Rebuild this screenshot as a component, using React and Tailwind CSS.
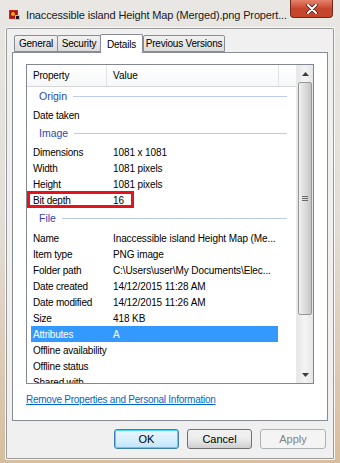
import React from "react";

const font = { fontFamily: '"Liberation Sans", Arial, sans-serif' };

function GroupRow({ label, h = "h-[20px]" }) {
  return (
    <div className={`flex items-center ${h} pl-[12px] pr-[9px] pb-[1px]`}>
      <span className="text-[#2f45b8] text-[10.5px] leading-none">{label}</span>
      <div className="flex-1 h-px bg-[#bccbe8] ml-[6px]" />
    </div>
  );
}

function Row({ label, value, selected, boxed }) {
  return (
    <div
      className={`relative flex items-center h-[16px] ml-[4px] w-[247px] ${
        selected ? "bg-[#3399ff] text-white" : "text-black"
      }`}
    >
      <span className="w-[82px] pl-[2px] whitespace-nowrap tracking-[-0.2px]">{label}</span>
      <span className="whitespace-nowrap tracking-[-0.1px]">{value}</span>
      {boxed && (
        <div className="absolute left-[-4px] top-[-1px] w-[107px] h-[17px] border-[3px] border-[#e3141c]" />
      )}
    </div>
  );
}

function Tab({ children, selected, w }) {
  return (
    <div
      className={`${w} flex items-center justify-center border border-[#898c95] whitespace-nowrap ${
        selected
          ? "bg-white border-b-0 h-[19px] -mb-px relative z-10 rounded-t-[2px]"
          : "bg-gradient-to-b from-[#f2f2f2] to-[#dcdcdc] h-[17px] mr-[-1px] rounded-t-[2px]"
      } text-[10px] tracking-[-0.2px] text-black`}
    >
      {children}
    </div>
  );
}

export default function App() {
  return (
    <div
      style={font}
      className="w-[340px] h-[463px] flex flex-col bg-gradient-to-b from-[#e9e7e4] via-[#e2ddd6] to-[#d7bd9f] overflow-hidden"
    >
      {/* title bar */}
      <div className="h-[28px] flex items-start shrink-0">
        <div className="pt-[10px] pl-[9px] flex items-center shrink-0">
          <svg width="11" height="10" viewBox="0 0 11 10">
            <rect x="0" y="0" width="9" height="9" fill="#c8261c" />
            <rect x="1" y="1" width="7" height="7" fill="#9c1a12" />
            <circle cx="4" cy="4" r="2" fill="#f2a31c" />
            <rect x="6" y="5" width="5" height="5" fill="#f6c21c" />
            <rect x="7" y="6" width="3" height="3" fill="#1c1c1c" />
          </svg>
        </div>
        <div className="pl-[6px] pt-[10px] text-[11px] tracking-[-0.15px] text-[#1a1a1a] whitespace-nowrap leading-none min-w-0 overflow-hidden">
          Inaccessible island Height Map (Merged).png Propert...
        </div>
        <div className="flex-1" />
        <div className="shrink-0 w-[43px] h-[18px] mr-[7px] rounded-b-[4px] border border-[#6b2a1c] border-t-0 bg-gradient-to-b from-[#e4826c] via-[#c9452c] to-[#c2472c] flex items-center justify-center">
          <svg width="12" height="10" viewBox="0 0 12 10">
            <path d="M2 1 L10 9 M10 1 L2 9" stroke="#3b1a14" strokeWidth="3.4" strokeLinecap="round" />
            <path d="M2 1 L10 9 M10 1 L2 9" stroke="#ffffff" strokeWidth="2" strokeLinecap="round" />
          </svg>
        </div>
      </div>

      {/* frame body */}
      <div className="flex-1 flex pl-[6px] pr-[6px] pb-[4px]">
        <div className="flex-1 flex flex-col bg-[#f0f0f0] border border-[#9a9a9a] rounded-[1px] shadow-[0_0_0_1px_#fbf8f4]">
          {/* tabs */}
          <div className="flex items-end pl-[7px] pt-[4px] h-[23px] shrink-0">
            <Tab w="w-[44px]">General</Tab>
            <Tab w="w-[44px]">Security</Tab>
            <Tab w="w-[43px]" selected>
              Details
            </Tab>
            <Tab w="w-[82px]">Previous Versions</Tab>
          </div>
          {/* panel */}
          <div className="mx-[5px] h-[369px] bg-white border border-[#898c95] flex flex-col text-[10px]">
            {/* list */}
            <div className="mt-[11px] mx-[13px] h-[320px] border border-[#828790] flex overflow-hidden">
              <div className="flex-1 flex flex-col overflow-hidden">
                {/* header */}
                <div className="h-[22px] flex border-b border-[#d5d5d5] bg-gradient-to-b from-white to-[#f6f7f8] shrink-0">
                  <div className="w-[80px] pl-[6px] flex items-center border-r border-[#e2e3e5] tracking-[-0.2px]">Property</div>
                  <div className="w-[172px] pl-[6px] flex items-center border-r border-[#e2e3e5]">Value</div>
                  <div className="flex-1" />
                </div>
                <div className="flex flex-col">
                  <GroupRow label="Origin" h="h-[20px]" />
                  <Row label="Date taken" value="" />
                  <GroupRow label="Image" h="h-[21px]" />
                  <Row label="Dimensions" value="1081 x 1081" />
                  <Row label="Width" value="1081 pixels" />
                  <Row label="Height" value="1081 pixels" />
                  <Row label="Bit depth" value="16" boxed />
                  <GroupRow label="File" h="h-[22px]" />
                  <Row label="Name" value="Inaccessible island Height Map (Me..." />
                  <Row label="Item type" value="PNG image" />
                  <Row label="Folder path" value="C:\Users\user\My Documents\Elec..." />
                  <Row label="Date created" value="14/12/2015 11:28 AM" />
                  <Row label="Date modified" value="14/12/2015 11:26 AM" />
                  <Row label="Size" value="418 KB" />
                  <Row label="Attributes" value="A" selected />
                  <Row label="Offline availability" value="" />
                  <Row label="Offline status" value="" />
                  <Row label="Shared with" value="" />
                </div>
              </div>
              {/* scrollbar */}
              <div className="w-[17px] flex flex-col bg-gradient-to-r from-[#e6e6e6] via-[#f4f4f4] to-[#e6e6e6] border-l border-[#eaeaea]">
                <div className="h-[17px] flex items-center justify-center">
                  <svg width="7" height="4" viewBox="0 0 7 4">
                    <path d="M0 4 L3.5 0 L7 4 Z" fill="#3c3c3c" />
                  </svg>
                </div>
                <div className="h-[233px] mx-[1px] rounded-[2px] border border-[#979797] bg-gradient-to-r from-[#f0f0f0] via-[#dcdcdc] to-[#c6c6c6] flex items-center justify-center">
                  <div className="flex flex-col gap-[1px]">
                    <div className="w-[6px] h-px bg-[#6a6a6a]" />
                    <div className="w-[6px] h-px bg-[#6a6a6a]" />
                    <div className="w-[6px] h-px bg-[#6a6a6a]" />
                  </div>
                </div>
                <div className="flex-1" />
                <div className="h-[17px] flex items-center justify-center">
                  <svg width="7" height="4" viewBox="0 0 7 4">
                    <path d="M0 0 L3.5 4 L7 0 Z" fill="#3c3c3c" />
                  </svg>
                </div>
              </div>
            </div>
            {/* link */}
            <div className="mt-[8px] ml-[13px] text-[10px] tracking-[-0.25px] text-[#0066cc] underline whitespace-nowrap">
              Remove Properties and Personal Information
            </div>
          </div>
          {/* buttons */}
          <div className="flex justify-end gap-[8px] pr-[7px] pt-[8px] text-[11px]">
            <div className="w-[65px] h-[20px] rounded-[3px] border border-[#3c7fb1] bg-gradient-to-b from-[#eaf6fd] via-[#d9f0fc] to-[#bee6fd] flex items-center justify-center shadow-[inset_0_0_0_1px_#48d5f8]">
              OK
            </div>
            <div className="w-[65px] h-[20px] rounded-[3px] border border-[#707070] bg-gradient-to-b from-[#f2f2f2] via-[#ebebeb] to-[#cfcfcf] flex items-center justify-center">
              Cancel
            </div>
            <div className="w-[66px] h-[20px] rounded-[3px] border border-[#adb2b5] bg-[#f4f4f4] text-[#838383] flex items-center justify-center">
              Apply
            </div>
          </div>
        </div>
      </div>
    </div>
  );
}
